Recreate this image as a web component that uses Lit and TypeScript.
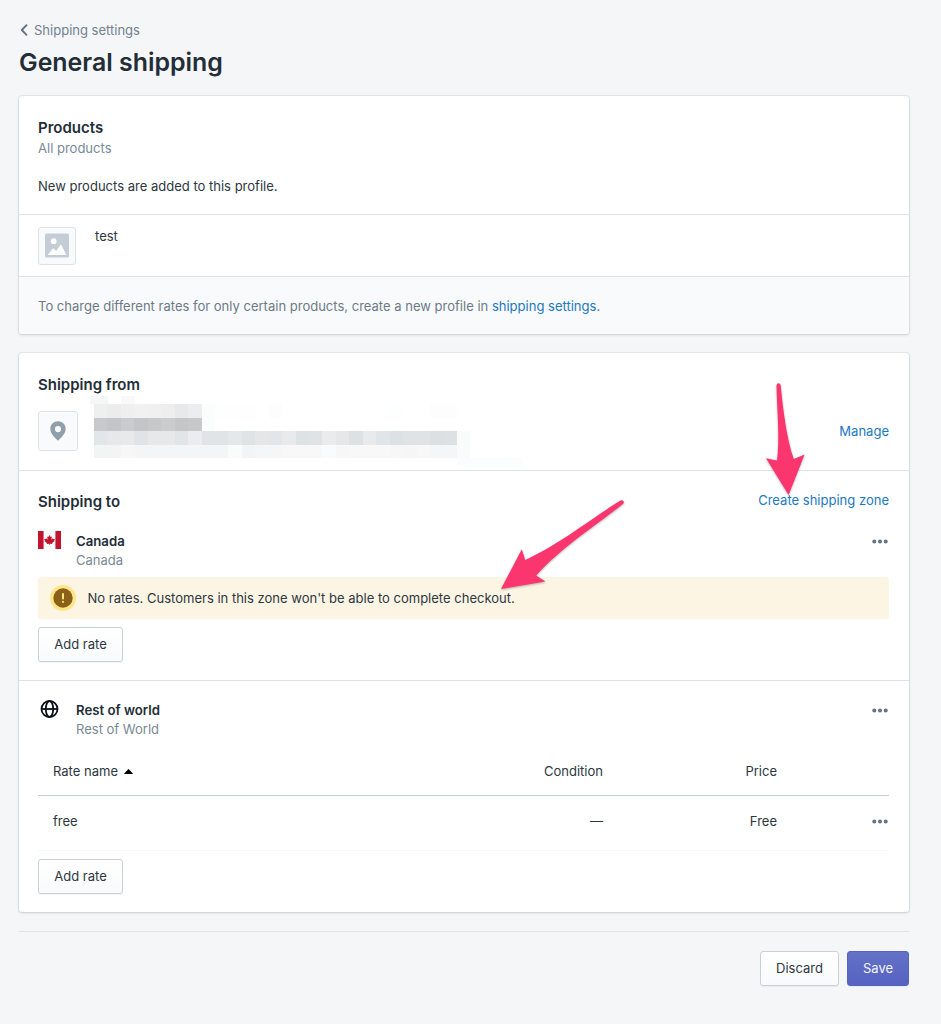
import { LitElement, html, css, svg } from "lit";
import { customElement } from "lit/decorators.js";

const MOSAIC: { y: number; h: number; cells: string[] }[] = [
  { y: 8, h: 13.5, cells: "eeefef ececec eeefee f1f1f1 eff0ef eeeeee e8e9ea ecedee fbfdfc fefefe fefefe fefefe ffffff fdfdfd ffffff ffffff ffffff ffffff ffffff ffffff ffffff ffffff fdfefe ffffff ffffff fdfdfd fdfdfd".split(" ") },
  { y: 21.5, h: 13.5, cells: "c7c9ca c3c6c8 cacbcc c3c6c8 c6c8c9 caccce c4c6c8 c6c8ca fbfdfc".split(" ") },
  { y: 35, h: 13.5, cells: "e3e6e8 e6e8ea e8e9eb e1e4e7 e7e8ea e7e8ea e2e5e8 ebecf1 e0e4e7 e0e4e7 e5e8ea dee3e6 e4e6e8 e2e6e9 e9eaeb dde2e5 dfe3e6 e9ebec e6e7e8 dde1e4 e9eaeb dfe5e8 dce1e4 dfe3e6 dfe3e6 dce0e3 dde1e4 fafcfc".split(" ") },
  { y: 48.5, h: 13.5, cells: "f3f4f4 f4f4f4 f7f7f7 f3f5f7 f4f5f6 f4f5f6 f3f5f7 f4f5f7 f3f5f6 f3f5f6 fafcfb f3f4f6 f5f6f7 f4f6f8 f8f8f8 f8f8f8 f8f8f8 f9fbfd f7f7f7 f8f8f8 f8f8f8 f8f8f8 f5f7f9 f6f6f6 f8f8f8 f4f6f7 f5f6f7 fafcfc".split(" ") },
];

const dots = html`<svg class="dots" width="16" height="5" viewBox="0 0 16 5">
  <circle cx="2.3" cy="2.5" r="2" /><circle cx="8" cy="2.5" r="2" /><circle cx="13.7" cy="2.5" r="2" />
</svg>`;

@customElement("app-root")
export class AppRoot extends LitElement {
  static styles = css`
    :host {
      display: block;
      position: relative;
      box-sizing: border-box;
      width: 100%;
      height: 1024px;
      padding: 21px 32px 0 19px;
      background: #f4f6f8;
      color: #2d3741;
      font: 400 13.02px/19px Inter, "Liberation Sans", sans-serif;
      overflow: hidden;
    }
    * { box-sizing: border-box; }
    svg { display: block; flex: none; }
    h1, h2, h3, p { margin: 0; }
    h1, h2, h3 { color: #232d37; }
    a { color: #1b78c2; text-decoration: none; }
    .sub { color: #7a8995; }
    .back { display: flex; align-items: center; gap: 5px; height: 18px; color: #738290; padding-left: 1px; }
    h1 { font-size: 24.9px; font-weight: 600; line-height: 36px; margin: 5px 0 16px; }
    h2 { font-size: 15px; font-weight: 600; line-height: 20px; }
    h3 { font-size: 13.2px; font-weight: 600; line-height: 19px; }
    .card { background: #fff; border-radius: 3px; box-shadow: 0 0 0 1px rgba(63, 63, 68, 0.07), 0 1px 3px rgba(63, 63, 68, 0.17); }
    .card + .card { margin-top: 19px; }
    .section { padding: 0 20px 0 19px; border-top: 1px solid #dfe3e8; }
    .section:first-child { border-top: 0; }
    .products { height: 118px; padding-top: 22px; }
    .products .sub { margin-top: 1px; }
    .products .note { margin-top: 19px; }
    .item { height: 62px; display: flex; gap: 19px; padding-top: 12px; }
    .thumb { width: 38px; height: 38px; border: 1px solid #dfe3e8; border-radius: 3px; background: #f9fafb; display: grid; place-items: center; }
    .hint { height: 58px; padding-top: 2px; display: flex; align-items: center; white-space: pre; background: #f9fafb; border-radius: 0 0 3px 3px; color: #6c7a87; }
    .from { height: 117px; padding-top: 22px; }
    .origin { display: flex; height: 66px; margin-top: 1px; }
    .pin { width: 40px; height: 40px; margin: 15px 12px 0 0; }
    .origin a { margin: 26px 0 0 auto; }
    .canada { height: 210px; padding-top: 21px; }
    .line { display: flex; justify-content: space-between; align-items: center; height: 20px; }
    .line a { margin-bottom: 4px; }
    .zone { display: grid; grid-template-columns: 38px 1fr auto; }
    .canada .zone { margin-top: 20px; }
    .dots { fill: #637381; margin: 6.5px 1px 0 0; }
    .flag, .globe { margin-top: -1px; }
    .banner { display: flex; align-items: center; gap: 11.5px; height: 42px; margin-top: 7px; padding-left: 12px; background: #fdf5e4; border-radius: 3px; }
    .btn { display: inline-flex; align-items: center; justify-content: center; height: 35px; border: 1px solid #c9d0d8; border-radius: 3px; background: linear-gradient(#fff, #f9fafb); box-shadow: 0 1px 0 rgba(22, 29, 37, 0.05); font: inherit; color: #2d3741; padding: 0; }
    .add { width: 85px; margin-top: 8px; }
    .world { height: 232px; padding-top: 20px; }
    .row { display: grid; grid-template-columns: 376px 174px 174px 1fr; padding-left: 15px; align-items: center; }
    .row > :nth-child(n + 2) { text-align: right; justify-self: end; }
    .row .dots { margin-top: 0; }
    .thead { height: 57px; padding-top: 8px; border-bottom: 1px solid #c9d1d9; }
    .trow { height: 55px; padding-bottom: 4px; border-bottom: 1px solid #f7f8f9; }
    .sort { display: flex; align-items: center; gap: 6px; }
    .footer { margin-top: 19px; padding-top: 19px; border-top: 1px solid #dfe3e8; display: flex; justify-content: flex-end; gap: 8px; }
    .footer .discard { width: 79px; }
    .footer .save { width: 62px; color: #f4f5fa; border-color: #5563c1; background: linear-gradient(#6371c7, #5563c1); }
    .arrows { position: absolute; left: 0; top: 0; fill: #fb366f; filter: drop-shadow(0 1px 1px rgba(0, 0, 0, 0.3)); pointer-events: none; }
  `;

  render() {
    return html`
      <div class="back">
        <svg width="9" height="12" viewBox="0 0 9 12" fill="none" stroke="#637381" stroke-width="1.9" stroke-linecap="round" stroke-linejoin="round"><path d="M6.500 1.200 1.800 6l4.700 4.800" /></svg>
        <span>Shipping settings</span>
      </div>
      <h1>General shipping</h1>

      <div class="card">
        <div class="section products">
          <h2>Products</h2>
          <p class="sub">All products</p>
          <p class="note">New products are added to this profile.</p>
        </div>
        <div class="section item">
          <div class="thumb">
            <svg width="26" height="26" viewBox="0 0 26 26"><rect x="1" y=".6" width="24" height="24" rx="1.5" fill="#c4cdd5" /><circle cx="9.700" cy="8.200" r="2.900" fill="#fff" /><path d="M3.600 22 9.200 15.300l3 2.700 4.700-6.800L22.400 22Z" fill="#fff" /></svg>
          </div>
          <span>test</span>
        </div>
        <div class="section hint">To charge different rates for only certain products, create a new profile in <a>shipping settings</a>.</div>
      </div>

      <div class="card">
        <div class="section from">
          <h2>Shipping from</h2>
          <div class="origin">
            <div class="thumb pin">
              <svg width="16" height="20" viewBox="0 0 16 20"><path fill="#919eab" fill-rule="evenodd" d="M8 .3C3.700.3.3 3.500.3 7.700c0 5.400 5.300 9.600 7.700 12 2.400-2.400 7.700-6.600 7.700-12C15.700 3.500 12.300.3 8 .3Zm0 4.700a3.100 3.100 0 1 1 0 6.200 3.100 3.100 0 0 1 0-6.200Z" /></svg>
            </div>
            <svg width="440" height="70" viewBox="-4 0 440 70" shape-rendering="crispEdges" aria-hidden="true">
              <rect x="-4" y="0" width="17.500" height="8" fill="#f6f6f6" /><rect x="27" y="0" width="13.500" height="8" fill="#f9f9f9" />
              ${MOSAIC.map((r) => r.cells.map((c, i) => svg`<rect x=${i * 13.44} y=${r.y} width="13.5" height=${r.h} fill=${"#" + c} />`))}
              <rect x="363" y="62" width="65" height="8" fill="#fbfcfd" />
            </svg>
            <a>Manage</a>
          </div>
        </div>
        <div class="section canada">
          <div class="line"><h2>Shipping to</h2><a>Create shipping zone</a></div>
          <div class="zone">
            <svg class="flag" width="23" height="18" viewBox="0 0 23 18"><path fill="#c0142f" d="M0 0h5.600v18H0zM17.400 0H23v18h-5.600z" /><path fill="#c0142f" d="m11.500 4-1.200 2-1.100-.4.400 3-1.600-1.300-.3.800-1.500-.2.700 1.700-.6.500 2.600 2-.2 1 2.500-.3V14h.6v-1.200l2.500.3-.2-1 2.600-2-.6-.5.700-1.700-1.500.2-.3-.8-1.600 1.300.4-3-1.100.4Z" /></svg>
            <div><h3>Canada</h3><p class="sub">Canada</p></div>
            ${dots}
          </div>
          <div class="banner">
            <svg width="26" height="26" viewBox="0 0 26 26"><circle cx="13" cy="13" r="13" fill="#ffe58a" /><circle cx="13" cy="13" r="9.700" fill="#8a6116" /><path d="M13 9v4.500M13 16.700v.2" stroke="#ffe58a" stroke-width="2" stroke-linecap="round" /></svg>
            <span>No rates. Customers in this zone won't be able to complete checkout.</span>
          </div>
          <button class="btn add">Add rate</button>
        </div>
        <div class="section world">
          <div class="zone">
            <svg class="globe" width="23" height="18" viewBox="0 0 23 18" fill="none" stroke="#0b1118" stroke-width="1.800"><circle cx="11.500" cy="9" r="8" /><ellipse cx="11.500" cy="9" rx="3.700" ry="8" /><path d="M3.500 9h16" /></svg>
            <div><h3>Rest of world</h3><p class="sub">Rest of World</p></div>
            ${dots}
          </div>
          <div class="row thead">
            <span class="sort">Rate name <svg width="9" height="5" viewBox="0 0 9 5"><path d="M0 5Q0 4.300 4.500 0 9 4.300 9 5Z" /></svg></span>
            <span>Condition</span><span>Price</span>
          </div>
          <div class="row trow"><span>free</span><span>—</span><span>Free</span>${dots}</div>
          <button class="btn add">Add rate</button>
        </div>
      </div>

      <div class="footer">
        <button class="btn discard">Discard</button>
        <button class="btn save">Save</button>
      </div>

      <svg class="arrows" width="941" height="1024" viewBox="0 0 941 1024" aria-hidden="true">
        <path d="M776.500 385.500Q776.800 383.300 778.500 383.300T780.700 385.200C783 410 787 440 793.800 459L804.600 454.600 788.600 495 766 458.200 777 460.600C780 440 777 410 776.500 385.500Z" />
        <path d="M620.500 500.500Q622.500 499.500 623.500 501.200T622.800 504C605 519 560 548 536.200 575.600L545.500 581.500 501 589 521.800 549.200 525.300 560C560 544 595 516 620.500 500.500Z" />
      </svg>
    `;
  }
}
